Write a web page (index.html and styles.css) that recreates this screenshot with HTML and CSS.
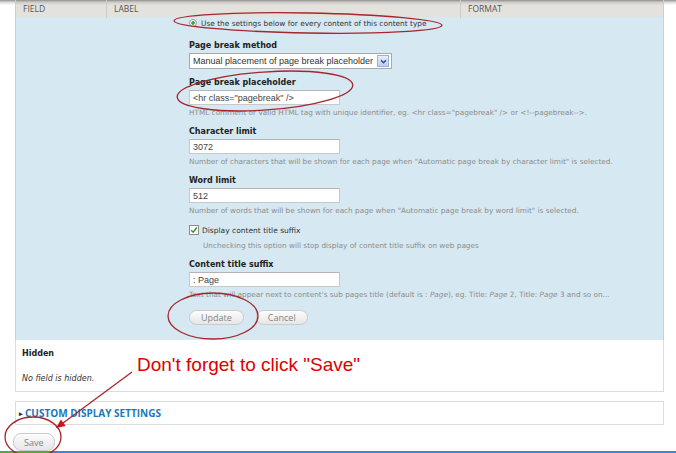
FILE: index.html
```html
<!DOCTYPE html>
<html lang="en">
<head>
    <meta charset="UTF-8">
    <title>Manage display</title>
    <link rel="stylesheet" href="styles.css">
</head>
<body>
    <div class="page">
        <div class="fields-table">
            <div class="thead">
                <span>Field</span>
                <span>Label</span>
                <span>Format</span>
            </div>

            <div class="settings-row">
                <div class="settings">
                    <div class="radio-line">
                        <span class="radio"></span>
                        Use the settings below for every content of this content type
                    </div>

                    <div class="item first">
                        <div class="label">Page break method</div>
                        <div class="select">
                            <span>Manual placement of page break placeholder</span>
                            <span class="select-arrow">
                                <svg width="9" height="9" viewBox="0 0 9 9"><path d="M2 3.2 L4.5 5.7 L7 3.2" fill="none" stroke="#2a4f9e" stroke-width="1.6"/></svg>
                            </span>
                        </div>
                    </div>

                    <div class="item">
                        <div class="label">Page break placeholder</div>
                        <input class="text" type="text" value='&lt;hr class="pagebreak" /&gt;'>
                        <div class="desc">HTML comment or valid HTML tag with unique identifier, eg. &lt;hr class="pagebreak" /&gt; or &lt;!--pagebreak--&gt;.</div>
                    </div>

                    <div class="item">
                        <div class="label">Character limit</div>
                        <input class="text" type="text" value="3072">
                        <div class="desc">Number of characters that will be shown for each page when "Automatic page break by character limit" is selected.</div>
                    </div>

                    <div class="item">
                        <div class="label">Word limit</div>
                        <input class="text" type="text" value="512">
                        <div class="desc">Number of words that will be shown for each page when "Automatic page break by word limit" is selected.</div>
                    </div>

                    <div class="check-line">
                        <span class="checkbox">
                            <svg width="8" height="8" viewBox="0 0 8 8"><path d="M1.2 4.2 L3.2 6.2 L6.9 1.5" fill="none" stroke="#3c8f2c" stroke-width="1.5"/></svg>
                        </span>
                        Display content title suffix
                    </div>
                    <div class="desc indent">Unchecking this option will stop display of content title suffix on web pages</div>

                    <div class="item">
                        <div class="label">Content title suffix</div>
                        <input class="text" type="text" value=": Page">
                        <div class="desc">Text that will appear next to content's sub pages title (default is : <em>Page</em>), eg. Title: <em>Page</em> 2, Title: <em>Page</em> 3 and so on...</div>
                    </div>

                    <div class="actions">
                        <button class="btn">Update</button>
                        <button class="btn">Cancel</button>
                    </div>
                </div>
            </div>

            <div class="region-row">
                <div class="region-title">Hidden</div>
                <div class="region-empty">No field is hidden.</div>
            </div>
        </div>

        <div class="custom-display">
            <span class="arrow">&#9656;</span>Custom display settings
        </div>

        <button class="btn save">Save</button>
    </div>

    <div class="taskbar">
        <span class="task-start"></span>
        <span class="task-rest"></span>
    </div>

    <div class="note">Don't forget to click "Save"</div>

    <svg class="marks" width="676" height="453" viewBox="0 0 676 453">
        <g fill="none" stroke="#a3272c" stroke-width="1.3">
            <ellipse cx="308" cy="23" rx="134" ry="10" transform="rotate(1 308 23)"/>
            <ellipse cx="265" cy="91" rx="88" ry="19" transform="rotate(-4 265 91)"/>
            <ellipse cx="213" cy="316" rx="45" ry="23"/>
            <ellipse cx="33" cy="437" rx="28" ry="20"/>
            <line x1="132" y1="372" x2="63" y2="423"/>
        </g>
        <polygon points="56,428 65.7,425.9 60.9,419.5" fill="#c8161d"/>
    </svg>
</body>
</html>
```

FILE: styles.css
```css
body {
    margin: 0;
    width: 676px;
    height: 453px;
    overflow: hidden;
    font-family: "DejaVu Sans", Verdana, sans-serif;
    color: #333;
    background: linear-gradient(to bottom, #8e8e8e 0, #d6d6d6 2px, #fff 5px) no-repeat;
    position: relative;
}
.page {
    padding: 0 12px 0 15px;
}
.thead {
    display: grid;
    grid-template-columns: 90px 354px 1fr;
    height: 17px;
    background: linear-gradient(to bottom, #8d8d8d 0, #c9c8c3 2px, #e3e2dc 5px);
    border-left: 1px solid #cfcfca;
    border-right: 1px solid #cfcfca;
    font-family: "Open Sans", sans-serif;
    font-size: 8.5px;
    line-height: 18px;
    color: #555;
    text-transform: uppercase;
}
.thead span {
    padding-left: 7px;
}
.thead span + span {
    border-left: 1px solid #cdccc6;
}
.settings-row {
    background: #d6e8f1;
    border-left: 1px solid #c3d3da;
    border-right: 1px solid #c3d3da;
    padding: 0 0 15px 173px;
}
.radio-line {
    display: flex;
    align-items: center;
    height: 10px;
    font-size: 7.4px;
    color: #333;
    padding-top: 1px;
    white-space: nowrap;
}
.radio {
    width: 6px;
    height: 6px;
    border: 1px solid #8aa29a;
    border-radius: 50%;
    background: radial-gradient(circle, #3fa83f 0, #3fa83f 1.5px, #fff 2px);
    margin-right: 4px;
}
.item {
    margin-top: 9px;
}
.item.first {
    margin-top: 13px;
}
.label {
    font-weight: bold;
    font-size: 8px;
    line-height: 10px;
    color: #222;
    margin-bottom: 2px;
}
.select {
    width: 198px;
    height: 14px;
    border: 1px solid #a9a9a9;
    background: #fff;
    display: flex;
    align-items: center;
    justify-content: space-between;
    padding-left: 3px;
    font-family: "Liberation Sans", Arial, sans-serif;
    font-size: 9px;
    color: #333;
}
.select-arrow {
    width: 10px;
    height: 10px;
    margin-right: 2px;
    border: 1px solid #98b1dc;
    background: linear-gradient(to bottom, #e6eefa, #bccfef);
    display: flex;
    align-items: center;
    justify-content: center;
}
.text {
    display: block;
    box-sizing: border-box;
    width: 151px;
    height: 15px;
    margin: 0;
    padding: 0 3px;
    border: 1px solid #c9c9c9;
    border-top-color: #b5b5b5;
    background: #fff;
    font-family: "Liberation Sans", Arial, sans-serif;
    font-size: 9px;
    color: #444;
    outline: none;
}
.desc {
    margin-top: 3px;
    font-size: 7.3px;
    line-height: 10px;
    color: #8d8d8d;
    white-space: nowrap;
}
.desc.indent {
    margin-top: 6px;
    padding-left: 14px;
}
.check-line {
    margin-top: 9px;
    display: flex;
    align-items: center;
    height: 10px;
    font-size: 7.5px;
    color: #333;
}
.checkbox {
    width: 8px;
    height: 8px;
    border: 1px solid #8c8c8c;
    background: #fff;
    margin-right: 3px;
    display: flex;
}
.actions {
    margin-top: 10px;
    display: flex;
    gap: 12px;
}
.btn {
    height: 15px;
    padding: 0 11px;
    border: 1px solid #cbcbcb;
    border-radius: 8px;
    background: linear-gradient(to bottom, #fdfdfd, #e6e6e6);
    font-family: "Open Sans", sans-serif;
    font-size: 9px;
    line-height: 13px;
    color: #848484;
}
.region-row {
    background: #fff;
    border: 1px solid #dcdcdc;
    border-top: none;
    padding: 9px 0 7px 6px;
}
.region-title {
    font-weight: bold;
    font-size: 8px;
    line-height: 10px;
    color: #222;
}
.region-empty {
    margin-top: 15px;
    font-style: italic;
    font-size: 8px;
    line-height: 10px;
    color: #333;
}
.custom-display {
    margin-top: 9px;
    height: 22px;
    border: 1px solid #dcdcdc;
    display: flex;
    align-items: center;
    padding-left: 3px;
    font-family: "Open Sans", sans-serif;
    font-weight: bold;
    font-size: 10px;
    color: #1b77bb;
    text-transform: uppercase;
}
.custom-display .arrow {
    font-size: 7px;
    color: #333;
    margin-right: 2px;
}
.save {
    display: block;
    margin: 8px 0 0 -2px;
    height: 18px;
    padding: 0 10px;
}
.taskbar {
    position: absolute;
    left: 0;
    right: 0;
    bottom: 0;
    height: 2px;
    display: flex;
}
.task-start {
    width: 50px;
    background: #56a83c;
}
.task-rest {
    flex: 1;
    background: #3f86d6;
}
.note {
    position: absolute;
    left: 137px;
    top: 355px;
    font-family: "Liberation Sans", Arial, sans-serif;
    font-size: 19px;
    line-height: 20px;
    color: #dd0000;
    white-space: nowrap;
}
.marks {
    position: absolute;
    left: 0;
    top: 0;
    pointer-events: none;
}
```
